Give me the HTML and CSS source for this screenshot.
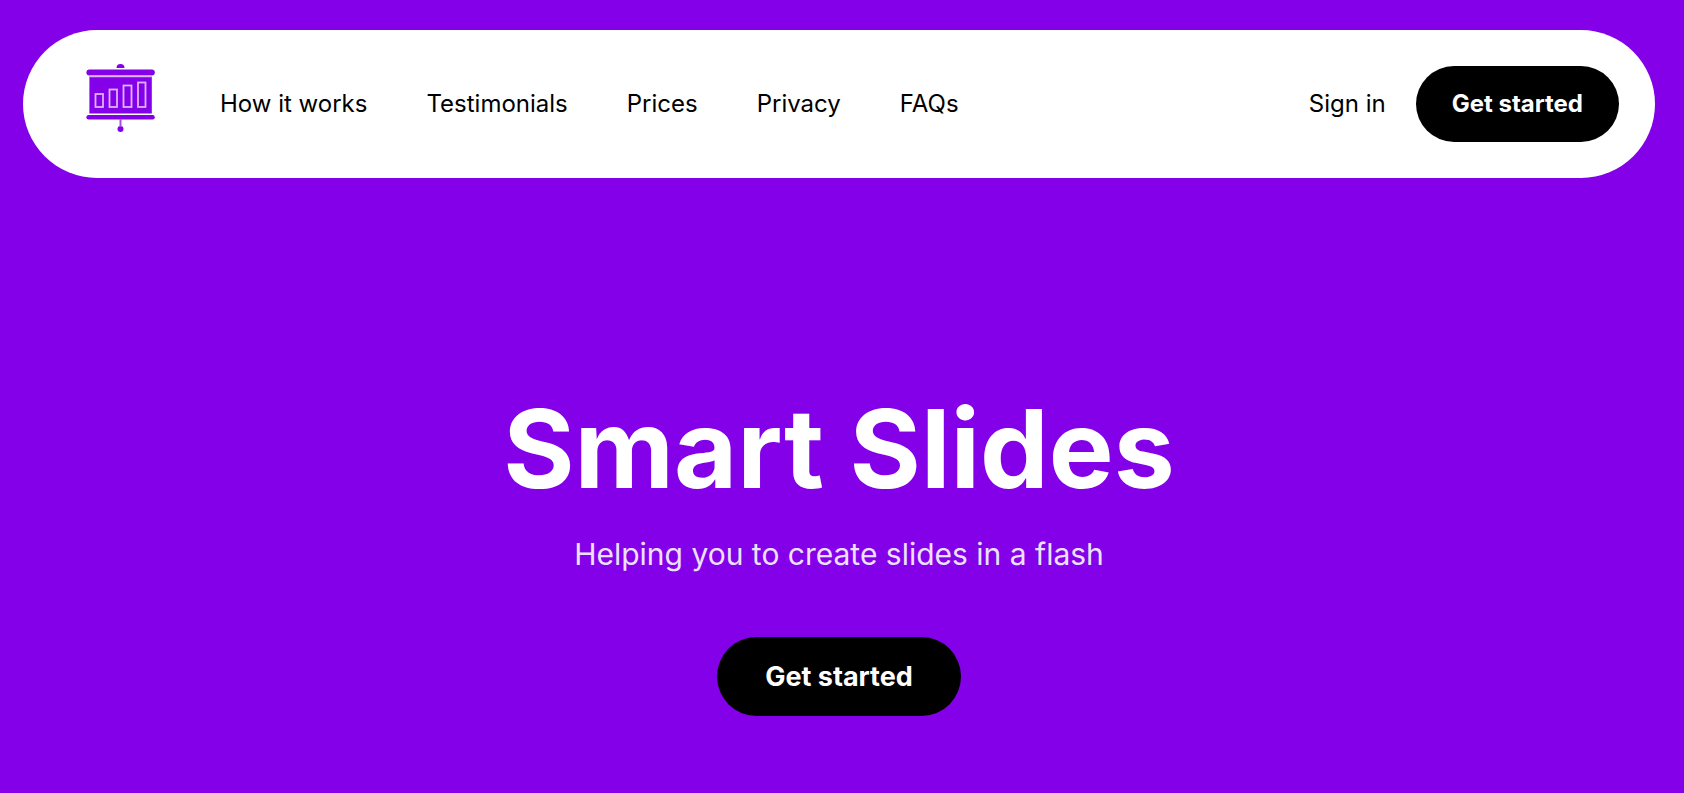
FILE: index.html
```
<!DOCTYPE html>
<html lang="en">

<head>
    <meta charset="UTF-8">
    <meta name="viewport" content="width=device-width, initial-scale=1.0">
    <title>Smart Slides</title>
    <link rel="stylesheet" href="styles.css">
</head>

<body>
    <header class="header">
        <a href="#" class="logo" aria-label="Smart Slides">
            <svg viewBox="0 0 70 70" width="70" height="70" aria-hidden="true">
                <g fill="#8300e9">
                    <path d="M31.500 6a4 4 0 0 1 8 0z" />
                    <rect x="1.400" y="7.400" width="68.400" height="6.200" rx="3" />
                    <rect x="4.400" y="14" width="62.400" height="37.500" />
                    <rect x="1.400" y="53" width="68.400" height="4.500" rx="2.200" />
                    <circle cx="35.500" cy="67" r="3" />
                </g>
                <path d="M35.500 57v8" stroke="#a74cf1" stroke-width="2" />
                <path d="M4.400 14.300h62.400" stroke="#dcb2f9" stroke-width="1.800" />
                <g fill="none" stroke="#dcb2f9" stroke-width="1.800">
                    <rect x="10.500" y="32" width="7.500" height="13" />
                    <rect x="24.500" y="27.500" width="7.500" height="17.500" />
                    <rect x="38.500" y="23.500" width="8" height="21.500" />
                    <rect x="53" y="20.500" width="7.500" height="24.500" />
                </g>
            </svg>
        </a>

        <nav class="nav">
            <a href="#how">How it works</a>
            <a href="#testimonials">Testimonials</a>
            <a href="#prices">Prices</a>
            <a href="#privacy">Privacy</a>
            <a href="#faqs">FAQs</a>
        </nav>

        <div class="actions">
            <a href="#signin">Sign in</a>
            <button type="button" class="btn">Get started</button>
        </div>
    </header>

    <main class="hero">
        <h1>Smart Slides</h1>
        <p>Helping you to create slides in a flash</p>
        <button type="button" class="btn btn-large">Get started</button>
    </main>
</body>

</html>
```
FILE: styles.css
```
* {
    box-sizing: border-box;
}

body {
    margin: 0;
    padding: 30px 29px 48px 23px;
    background-color: #8300e9;
    color: black;
    font-family: Inter, "Liberation Sans", sans-serif;
    font-size: 24px;
    line-height: 36px;
}

a {
    color: inherit;
    text-decoration: none;
}

.header {
    display: flex;
    align-items: center;
    padding: 32px 36px 32px 62px;
    background-color: white;
    border-radius: 74px;
}

.logo {
    display: flex;
    margin-right: 65px;
    padding-bottom: 14px;
}

.nav {
    display: flex;
    gap: 59px;
}

.actions {
    display: flex;
    align-items: center;
    gap: 30px;
    margin-left: auto;
}

.btn {
    padding: 20px 36px;
    border: none;
    border-radius: 40px;
    background-color: black;
    color: white;
    font: inherit;
    font-weight: 700;
    cursor: pointer;
}

.btn:hover {
    background-color: #222;
}

/* Hero */
.hero {
    display: flex;
    flex-direction: column;
    align-items: center;
    padding-top: 216px;
    text-align: center;
}

.hero h1 {
    margin: 0;
    color: white;
    font-size: 109px;
    font-weight: 700;
    line-height: 108px;
}

.hero p {
    margin: 30px 0 60px;
    color: #ede0ff;
    font-size: 30px;
    line-height: 45px;
}

.btn-large {
    padding: 20px 48px;
    font-size: 27px;
    line-height: 39px;
}
```
